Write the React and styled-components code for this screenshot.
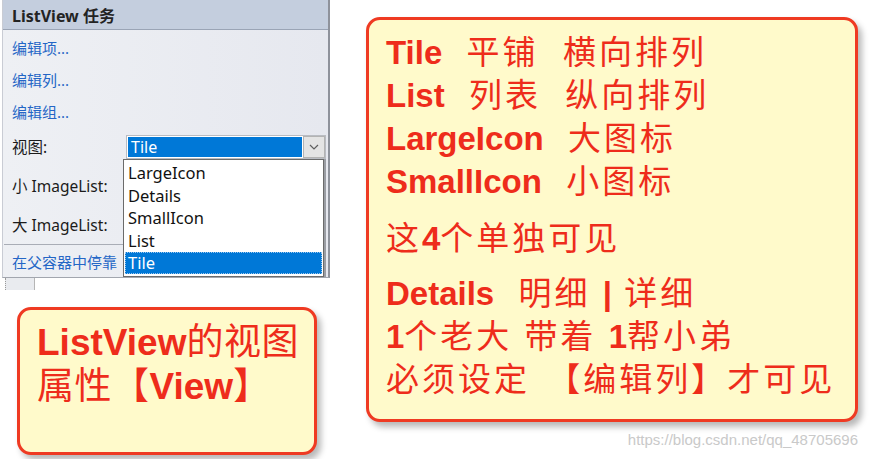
import React from "react";
import styled, { createGlobalStyle } from "styled-components";

const Global = createGlobalStyle`
  html, body { margin: 0; padding: 0; background: #ffffff; }
  body { font-family: "Noto Sans", "Noto Sans CJK SC", sans-serif; }
`;

const Page = styled.div`
  position: relative;
  width: 895px;
  height: 459px;
  overflow: hidden;
  background: #ffffff;
  display: flex;
  align-items: flex-start;
`;

const LeftCol = styled.div`
  width: 330px;
  display: flex;
  flex-direction: column;
`;

const Panel = styled.div`
  margin-left: 2px;
  width: 328px;
  height: 278px;
  box-sizing: border-box;
  border-left: 1px solid #c9ccd4;
  border-right: 2px solid #8e929b;
  border-bottom: 1px solid #a2a6ae;
  background: linear-gradient(90deg, #eef0f4 0%, #e6e8ef 100%);
  display: flex;
  flex-direction: column;
  font-family: "Noto Sans", "Noto Sans CJK SC", sans-serif;
  font-size: 15.5px;
  color: #1b1b1b;
`;

const Header = styled.div`
  height: 29px;
  border-bottom: 1px solid #9aa4b5;
  background: #c4cede;
  display: flex;
  align-items: center;
  padding-left: 9px;
  font-weight: 700;
  font-size: 16px;
  color: #232323;
`;

const Body = styled.div`
  padding: 1px 3px 0 9px;
  display: flex;
  flex-direction: column;
`;

const LinkRow = styled.div`
  height: ${(p) => p.$h || 32}px;
  display: flex;
  align-items: center;
  color: #2466c6;
  font-size: 15px;
  white-space: nowrap;
`;

const PropRow = styled.div`
  height: 39px;
  display: grid;
  grid-template-columns: 114px 200px;
  align-items: center;
  white-space: nowrap;
`;

const Separator = styled.div`
  height: 1px;
  margin-left: -8px;
  background: #a9adb6;
`;

const ComboWrap = styled.div`
  position: relative;
  height: 24px;
  box-sizing: border-box;
  border: 1px solid #b9bcc2;
  background: #ffffff;
  display: flex;
`;

const ComboValue = styled.div`
  flex: 1;
  margin: 1px;
  background: ${(p) => (p.$selected ? "#0078d7" : "#ffffff")};
  color: #ffffff;
  font-size: 16px;
  padding-left: 3px;
  display: flex;
  align-items: center;
`;

const ComboButton = styled.div`
  width: 22px;
  box-sizing: border-box;
  border: 1px solid #b3b3b3;
  background: #e4e4e4;
  display: flex;
  align-items: center;
  justify-content: center;
`;

const DropList = styled.div`
  position: absolute;
  top: 23px;
  left: -4px;
  width: 201px;
  height: 118px;
  box-sizing: border-box;
  border: 1px solid #6b6b6b;
  background: #ffffff;
  padding: 2px 1px 0 1px;
  z-index: 5;
  box-shadow: 2px 0 0 #9a9da3;
`;

const DropItem = styled.div`
  height: 22.5px;
  box-sizing: border-box;
  display: flex;
  align-items: center;
  padding-left: 3px;
  font-size: 16.5px;
  color: ${(p) => (p.$active ? "#ffffff" : "#111111")};
  background: ${(p) => (p.$active ? "#0078d7" : "transparent")};
  outline: ${(p) => (p.$active ? "1px dotted #9cc7ee" : "none")};
  outline-offset: -1px;
`;

const Stub = styled.div`
  margin-left: 5px;
  width: 28px;
  height: 12px;
  border-left: 1px dotted #9a9a9a;
  border-right: 1px solid #b5b5b5;
  background: #e9ebef;
`;

const Callout = styled.div`
  box-sizing: border-box;
  width: ${(p) => p.$w}px;
  height: ${(p) => p.$h}px;
  margin: ${(p) => p.$m};
  border: 3px solid #ef3a22;
  border-radius: 14px;
  background: #fffacb;
  box-shadow: 4px 5px 6px rgba(0, 0, 0, 0.28);
  padding: ${(p) => p.$pad};
  color: #ee2c1b;
  font-family: "Liberation Sans", "Noto Sans CJK SC", sans-serif;
  font-size: ${(p) => p.$fs}px;
  letter-spacing: ${(p) => p.$ls}px;
  white-space: pre;
`;

const Line = styled.div`
  line-height: ${(p) => p.$lh}px;
  height: ${(p) => p.$lh}px;
  margin-top: ${(p) => p.$mt || 0}px;
  word-spacing: ${(p) => p.$ws || 0}px;
`;

const B = styled.b`
  font-weight: 700;
  letter-spacing: 0;
`;

const RightCol = styled.div`
  margin-left: 36px;
  margin-top: 17px;
`;

const Watermark = styled.div`
  position: absolute;
  right: 37px;
  top: 431px;
  font-family: "Liberation Sans", sans-serif;
  font-size: 15px;
  color: #c9c9c9;
`;

const Chevron = () => (
  <svg width="10" height="6" viewBox="0 0 10 6">
    <path d="M1 1 L5 5 L9 1" fill="none" stroke="#5f5f5f" strokeWidth="1.2" />
  </svg>
);

export default function App() {
  const items = ["LargeIcon", "Details", "SmallIcon", "List", "Tile"];
  return (
    <Page>
      <Global />
      <LeftCol>
        <Panel>
          <Header>ListView 任务</Header>
          <Body>
            <LinkRow>编辑项...</LinkRow>
            <LinkRow>编辑列...</LinkRow>
            <LinkRow>编辑组...</LinkRow>
            <PropRow>
              <span>视图:</span>
              <ComboWrap>
                <ComboValue $selected>Tile</ComboValue>
                <ComboButton>
                  <Chevron />
                </ComboButton>
                <DropList>
                  {items.map((it) => (
                    <DropItem key={it} $active={it === "Tile"}>
                      {it}
                    </DropItem>
                  ))}
                </DropList>
              </ComboWrap>
            </PropRow>
            <PropRow>
              <span>小 ImageList:</span>
              <ComboWrap>
                <ComboValue />
              </ComboWrap>
            </PropRow>
            <PropRow>
              <span>大 ImageList:</span>
              <ComboWrap>
                <ComboValue />
              </ComboWrap>
            </PropRow>
            <Separator />
            <LinkRow $h={32}>在父容器中停靠</LinkRow>
          </Body>
        </Panel>
        <Stub />
        <Callout $w={300} $h={148} $m="17px 0 0 17px" $pad="11px 0 0 17px" $fs={37} $ls={0.5}>
          <Line $lh={44}>
            <B>ListView</B>的视图
          </Line>
          <Line $lh={44}>
            属性【<B>View</B>】
          </Line>
        </Callout>
      </LeftCol>
      <RightCol>
        <Callout $w={492} $h={405} $m="0" $pad="11px 0 0 17px" $fs={33} $ls={3}>
          <Line $lh={43}>
            <B>Tile</B>{"  平铺  横向排列"}
          </Line>
          <Line $lh={43}>
            <B>List</B>{"  列表  纵向排列"}
          </Line>
          <Line $lh={43}>
            <B>LargeIcon</B>{"  大图标"}
          </Line>
          <Line $lh={43}>
            <B>SmallIcon</B>{"  小图标"}
          </Line>
          <Line $lh={43} $mt={14}>
            这<B>4</B>个单独可见
          </Line>
          <Line $lh={43} $mt={12}>
            <B>Details</B>{"  明细 "}<B>|</B>{" 详细"}
          </Line>
          <Line $lh={43}>
            <B>1</B>个老大 带着 <B>1</B>帮小弟
          </Line>
          <Line $lh={43} $ws={5}>{"必须设定 【编辑列】才可见"}</Line>
        </Callout>
      </RightCol>
      <Watermark>https://blog.csdn.net/qq_48705696</Watermark>
    </Page>
  );
}
